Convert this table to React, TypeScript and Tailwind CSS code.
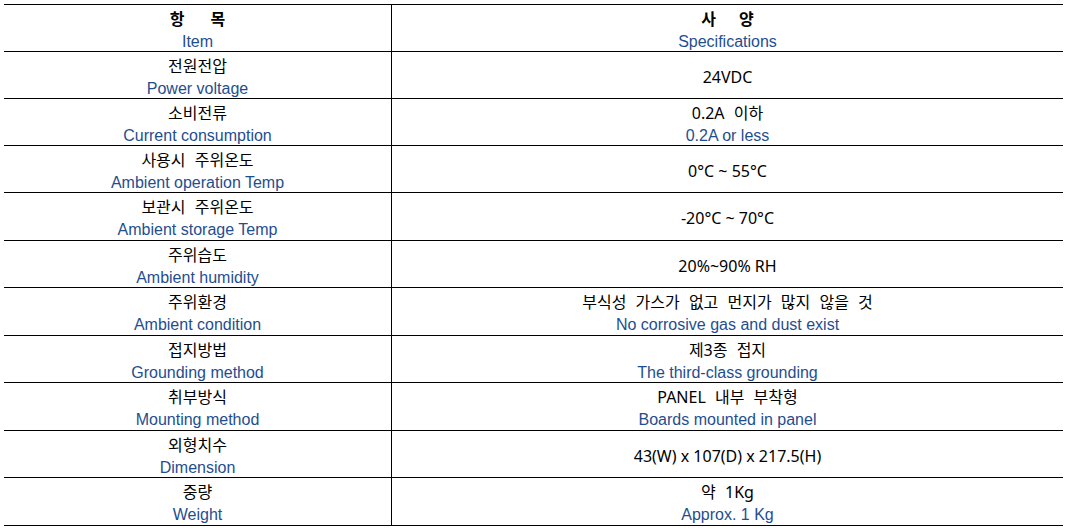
type Cell = { ko: string; en?: string };
type Row = { item: Cell; spec: Cell; h: string };

// heights follow the ruled lines of the spec sheet (47 / 48 px alternate)
const ROWS: Row[] = [
  { item: { ko: "전원전압", en: "Power voltage" }, spec: { ko: "24VDC" }, h: "h-[47px]" },
  { item: { ko: "소비전류", en: "Current consumption" }, spec: { ko: "0.2A 이하", en: "0.2A or less" }, h: "h-[47px]" },
  { item: { ko: "사용시 주위온도", en: "Ambient operation Temp" }, spec: { ko: "0°C ~ 55°C" }, h: "h-[47px]" },
  { item: { ko: "보관시 주위온도", en: "Ambient storage Temp" }, spec: { ko: "-20°C ~ 70°C" }, h: "h-[48px]" },
  { item: { ko: "주위습도", en: "Ambient humidity" }, spec: { ko: "20%~90% RH" }, h: "h-[47px]" },
  {
    item: { ko: "주위환경", en: "Ambient condition" },
    spec: { ko: "부식성 가스가 없고 먼지가 많지 않을 것", en: "No corrosive gas and dust exist" },
    h: "h-[48px]",
  },
  { item: { ko: "접지방법", en: "Grounding method" }, spec: { ko: "제3종 접지", en: "The third-class grounding" }, h: "h-[47px]" },
  { item: { ko: "취부방식", en: "Mounting method" }, spec: { ko: "PANEL 내부 부착형", en: "Boards mounted in panel" }, h: "h-[48px]" },
  { item: { ko: "외형치수", en: "Dimension" }, spec: { ko: "43(W) x 107(D) x 217.5(H)" }, h: "h-[47px]" },
  { item: { ko: "중량", en: "Weight" }, spec: { ko: "약 1Kg", en: "Approx. 1 Kg" }, h: "h-[48px]" },
];

const KO = "font-['Noto_Sans','Noto_Sans_CJK_KR',sans-serif] text-[16px] leading-[22px] text-black whitespace-pre";
const EN = "font-['Liberation_Sans',Arial,sans-serif] text-[16px] leading-[23px] text-[#1f4e8f]";

// hangul lines are set with wide word gaps, plain latin/number lines are not
const hasHangul = (s: string) => /[\uac00-\ud7a3]/.test(s);

function Ko({ text }: { text: string }) {
  return <span className={`${KO} ${hasHangul(text) ? "[word-spacing:5px]" : ""}`}>{text}</span>;
}

function CellBody({ c }: { c: Cell }) {
  if (!c.en) {
    return (
      <div className="flex h-full items-center justify-center pt-[2px]">
        <Ko text={c.ko} />
      </div>
    );
  }
  return (
    <div className="flex h-full flex-col items-center pt-[3px]">
      <Ko text={c.ko} />
      <span className={EN}>{c.en}</span>
    </div>
  );
}

export default function App() {
  return (
    <div className="min-h-screen bg-white p-[4px]">
      <div className="w-[1059px] border-t border-black">
        {/* header */}
        <div className="grid h-[47px] grid-cols-[388px_1fr] border-b border-black">
          <div className="border-r border-black">
            <div className="flex h-full flex-col items-center pt-[3px]">
              <span className={`${KO} font-bold`}>
                항<span className="ml-[26px]">목</span>
              </span>
              <span className={EN}>Item</span>
            </div>
          </div>
          <div className="flex h-full flex-col items-center pt-[3px]">
            <span className={`${KO} font-bold`}>
              사<span className="ml-[23px]">양</span>
            </span>
            <span className={EN}>Specifications</span>
          </div>
        </div>

        {ROWS.map((r) => (
          <div key={r.item.ko} className={`grid grid-cols-[388px_1fr] border-b border-black ${r.h}`}>
            <div className="border-r border-black">
              <CellBody c={r.item} />
            </div>
            <CellBody c={r.spec} />
          </div>
        ))}
      </div>
    </div>
  );
}
